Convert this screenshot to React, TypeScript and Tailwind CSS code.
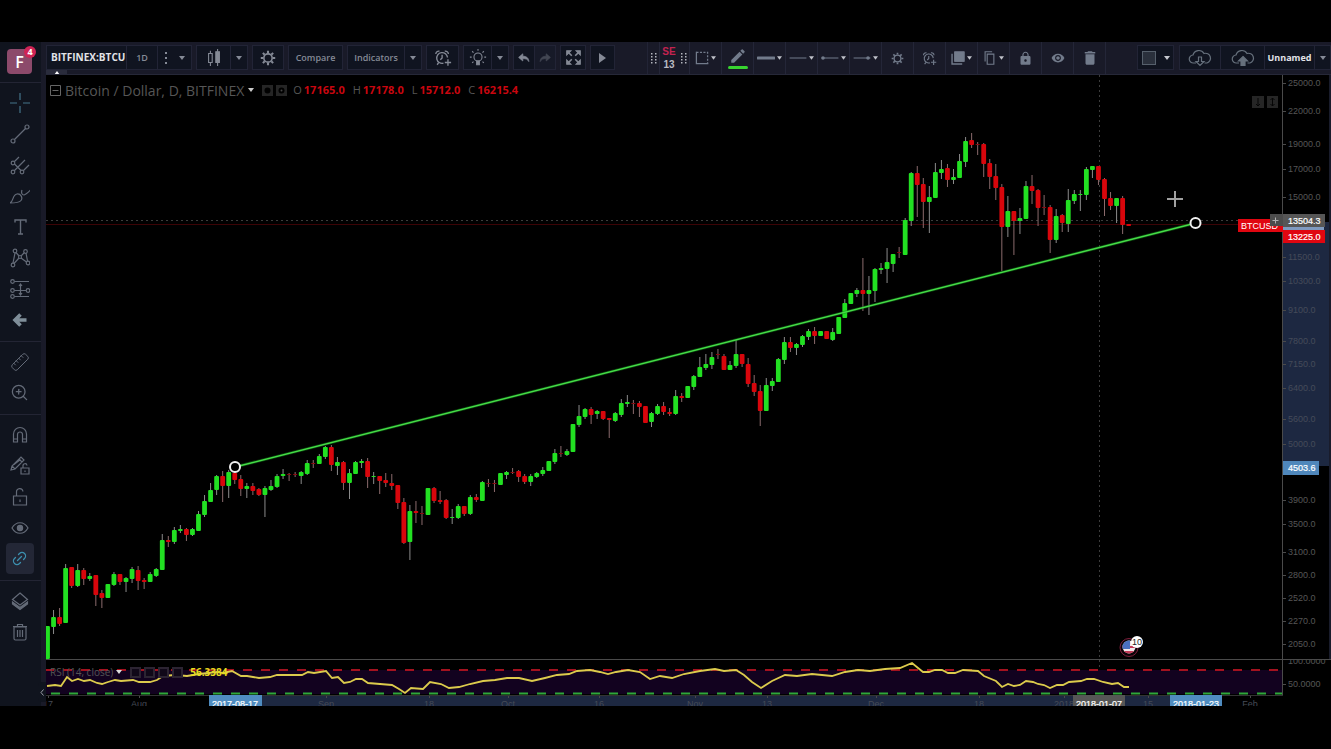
import type { ReactNode } from 'react';
import { useState } from 'react';
import { Link2, Ruler, ZoomIn } from 'lucide-react';
import { MdCreate, MdLock, MdDelete, MdRemoveRedEye } from 'react-icons/md';

// [up, body top, body bottom, wick top, wick bottom], one entry per day
type Candle = [number, number, number, number, number];

const candles: Candle[] = [
    [1, 626, 659, 626, 659], [1, 617, 627, 610, 634], [0, 617, 624, 608, 626], [1, 568, 623, 564, 623],
    [0, 567, 586, 567, 588], [1, 570, 586, 564, 587], [0, 570, 579, 568, 585], [1, 576, 579, 573, 581],
    [0, 575, 595, 575, 606], [0, 593, 598, 590, 608], [1, 584, 598, 584, 598], [1, 574, 585, 572, 586],
    [0, 574, 582, 574, 585], [1, 578, 582, 577, 592], [1, 569, 579, 567, 583], [0, 570, 581, 566, 590],
    [0, 580, 582, 578, 589], [1, 574, 582, 572, 582], [1, 569, 576, 568, 577], [1, 540, 570, 534, 570],
    [0, 540, 542, 536, 547], [1, 530, 542, 527, 544], [1, 529, 531, 525, 533], [0, 529, 535, 528, 541],
    [1, 529, 535, 528, 536], [1, 514, 531, 511, 531], [1, 501, 515, 495, 517], [1, 490, 502, 483, 502],
    [1, 476, 490, 475, 495], [0, 476, 486, 471, 502], [1, 472, 486, 470, 498], [0, 473, 480, 470, 484],
    [0, 479, 489, 475, 496], [1, 486, 489, 483, 498], [0, 486, 491, 483, 495], [0, 489, 495, 488, 496],
    [1, 488, 495, 486, 517], [1, 486, 490, 480, 491], [1, 476, 487, 474, 488], [1, 474, 476, 469, 479],
    [0, 474, 475, 473, 481], [0, 474, 475, 472, 477], [1, 472, 476, 471, 484], [1, 463, 474, 460, 475],
    [0, 463, 464, 460, 468], [1, 456, 464, 454, 464], [1, 447, 457, 446, 459], [0, 447, 465, 445, 471],
    [1, 462, 466, 457, 475], [0, 462, 483, 461, 490], [1, 473, 483, 469, 499], [1, 462, 474, 461, 474],
    [1, 461, 463, 459, 468], [0, 461, 477, 458, 488], [1, 476, 477, 472, 484], [0, 476, 481, 476, 494],
    [0, 480, 483, 473, 487], [0, 483, 486, 474, 490], [0, 485, 503, 485, 509], [0, 502, 543, 498, 544],
    [1, 511, 542, 505, 560], [0, 511, 513, 501, 523], [0, 513, 514, 506, 525], [1, 488, 515, 488, 515],
    [0, 488, 501, 487, 503], [0, 500, 502, 491, 504], [0, 500, 518, 499, 519], [1, 517, 518, 509, 524],
    [1, 506, 518, 504, 519], [0, 506, 514, 506, 516], [1, 497, 514, 495, 515], [0, 497, 500, 494, 502],
    [1, 482, 501, 481, 501], [0, 483, 484, 479, 487], [0, 483, 484, 480, 492], [1, 473, 485, 473, 485],
    [1, 472, 475, 471, 479], [0, 472, 473, 468, 474], [0, 471, 477, 470, 482], [0, 476, 482, 474, 484],
    [1, 476, 482, 474, 486], [1, 473, 477, 472, 478], [1, 470, 474, 467, 476], [1, 461, 471, 461, 471],
    [1, 453, 462, 449, 464], [0, 453, 454, 446, 457], [1, 451, 455, 449, 456], [1, 424, 452, 424, 452],
    [1, 416, 425, 405, 427], [1, 409, 417, 408, 419], [0, 409, 415, 407, 424], [1, 411, 414, 410, 419],
    [0, 411, 419, 411, 420], [0, 418, 420, 418, 438], [1, 413, 421, 412, 422], [1, 403, 415, 399, 417],
    [1, 402, 404, 395, 407], [0, 403, 404, 400, 414], [0, 403, 407, 401, 417], [0, 406, 423, 406, 423],
    [1, 413, 422, 412, 427], [1, 406, 414, 404, 415], [0, 406, 412, 402, 415], [0, 412, 414, 408, 416],
    [1, 396, 414, 390, 415], [0, 396, 398, 393, 402], [1, 386, 398, 386, 398], [1, 376, 387, 375, 390],
    [1, 367, 377, 357, 377], [1, 364, 368, 354, 370], [1, 357, 365, 352, 369], [0, 354, 355, 349, 359],
    [0, 356, 370, 354, 370], [1, 365, 370, 361, 370], [1, 354, 366, 340, 368], [0, 354, 364, 354, 367],
    [0, 364, 384, 358, 387], [0, 383, 392, 375, 396], [0, 391, 411, 385, 426], [1, 385, 411, 378, 411],
    [1, 381, 386, 378, 391], [1, 359, 382, 358, 382], [1, 342, 360, 337, 364], [0, 342, 348, 337, 352],
    [1, 344, 348, 343, 355], [1, 336, 345, 335, 347], [1, 331, 337, 329, 340], [0, 331, 336, 327, 344],
    [1, 331, 336, 331, 336], [0, 331, 339, 331, 339], [1, 332, 340, 328, 341], [1, 317, 334, 317, 334],
    [1, 303, 318, 299, 318], [1, 293, 304, 293, 304], [1, 290, 294, 288, 297], [0, 290, 294, 258, 311],
    [1, 290, 294, 276, 315], [1, 269, 291, 268, 302], [1, 268, 270, 263, 274], [1, 262, 269, 248, 283],
    [1, 254, 264, 254, 272], [0, 252, 253, 247, 258], [1, 220, 255, 218, 255], [1, 173, 221, 172, 226],
    [0, 173, 185, 166, 217], [0, 184, 202, 178, 228], [1, 197, 202, 186, 233], [1, 172, 198, 163, 198],
    [1, 169, 173, 160, 179], [0, 168, 180, 164, 187], [1, 177, 180, 169, 184], [1, 161, 178, 154, 178],
    [1, 141, 162, 137, 167], [0, 140, 145, 133, 148], [0, 144, 145, 142, 155], [0, 144, 164, 143, 177],
    [0, 163, 177, 159, 189], [0, 176, 188, 164, 200], [0, 187, 227, 184, 271], [1, 211, 227, 196, 237],
    [0, 211, 221, 211, 255], [1, 218, 221, 208, 234], [1, 186, 219, 181, 219], [0, 186, 191, 175, 204],
    [0, 190, 208, 189, 226], [0, 207, 208, 195, 215], [0, 207, 240, 205, 253], [1, 216, 240, 209, 243],
    [0, 215, 223, 214, 232], [1, 200, 224, 189, 232], [1, 194, 201, 190, 204], [1, 194, 195, 190, 211],
    [1, 169, 195, 167, 200], [1, 166, 170, 166, 178], [0, 166, 180, 166, 185], [0, 179, 199, 178, 216],
    [0, 198, 206, 192, 210], [1, 198, 206, 198, 223], [0, 198, 225, 196, 234], [0, 224, 226, 224, 226],
];

const rsi =
    '47,686 55,685 61,686 67,677 72,681 78,679 84,681 90,680 97,683 102,684 108,682 115,680 121,681 133,680 139,682 150,682 157,680 163,676 175,675 187,676 199,674 217,672 223,673 232,671 241,676 247,676 259,678 270,677 277,675 302,675 308,672 314,673 326,671 332,678 338,677 344,683 350,682 356,679 362,679 368,683 380,684 392,685 399,689 405,693 411,688 423,689 430,682 441,684 449,688 459,687 470,684 483,681 495,680 507,678 519,678 532,681 545,678 557,675 569,674 577,671 590,670 600,672 608,674 616,672 628,670 640,672 650,679 660,676 672,678 684,674 700,671 715,669 724,671 736,670 744,675 752,682 761,688 772,681 785,675 797,676 812,674 832,676 845,672 858,670 870,671 885,669 900,668 912,663 923,672 929,672 935,670 942,670 948,673 955,673 963,670 978,671 984,676 996,681 1002,687 1008,684 1014,686 1020,685 1026,681 1033,682 1038,684 1044,685 1050,688 1057,685 1063,685 1069,682 1081,681 1087,679 1094,679 1103,682 1112,684 1118,683 1124,687 1129,687';

const prices: [string, number][] = [
    ['25000.0', 83], ['22000.0', 111], ['19000.0', 144], ['17000.0', 169], ['15000.0', 197],
    ['11500.0', 257], ['10300.0', 281], ['9100.0', 310], ['7800.0', 341], ['7150.0', 364],
    ['6400.0', 388], ['5600.0', 419], ['5000.0', 444], ['3900.0', 500], ['3500.0', 524],
    ['3100.0', 552], ['2800.0', 575], ['2520.0', 598], ['2270.0', 621], ['2050.0', 644],
    ['50.0000', 684],
];

const dates: [string, number][] = [
    ['17', 48], ['Aug', 139], ['Sep', 326], ['18', 429], ['Oct', 508], ['16', 599], ['Nov', 695],
    ['13', 767], ['Dec', 876], ['18', 979], ['2018', 1064], ['15', 1148], ['Feb', 1250],
];

function Svg({ size = 20, children }: { size?: number; children: ReactNode }) {
    return (
        <svg width={size} height={size} viewBox="0 0 20 20" fill="none" stroke="currentColor" strokeWidth="1.2">
            {children}
        </svg>
    );
}

function Caret({ className = '' }: { className?: string }) {
    return (
        <svg width="6" height="4" viewBox="0 0 6 4" className={className}>
            <path d="M0 0h6L3 4z" fill="currentColor" />
        </svg>
    );
}

function AlarmIcon({ size = 18 }: { size?: number }) {
    return (
        <Svg size={size}>
            <path
                d="M15 9.500a6 6 0 1 0-4.500 6.300M9 6.500V10l-2 2M2 5.500c0-2 2-3.500 4-3M12 2.500c2-.5 4 1 4 3M3.500 17.500l1.500-2M15.500 11.500v7M12 15h7"
                strokeWidth="1.500"
            />
        </Svg>
    );
}

function GearIcon({ size = 18 }: { size?: number }) {
    return (
        <Svg size={size}>
            <circle cx="10" cy="10" r="5.200" strokeWidth="2" />
            <path
                d="M10 1v3M10 16v3M1 10h3M16 10h3M3.600 3.600l2.200 2.200M14.200 14.200l2.200 2.200M3.600 16.400l2.200-2.200M14.200 5.800l2.200-2.200"
                strokeWidth="2.600"
            />
        </Svg>
    );
}

function CloudIcon({ up = false }: { up?: boolean }) {
    return (
        <svg width="24" height="18" viewBox="0 0 24 18" fill="none" stroke="currentColor" strokeWidth="1.200">
            <path d="M8 14H5.500a4 4 0 0 1-.5-8A6 6 0 0 1 16 4.500a4.800 4.800 0 0 1 3 9.500h-2.500" />
            {up ? (
                <path d="M12 7.500l4.500 4.500H14v4.500h-4V12H7.500z" fill="currentColor" />
            ) : (
                <path d="M10.500 8h3v4.500H16l-4 4-4-4h2.500z" />
            )}
        </svg>
    );
}

function LineIcon({ kind }: { kind: 'thick' | 'thin' | 'start' | 'end' }) {
    return (
        <svg width="18" height="6" viewBox="0 0 18 6" stroke="currentColor" fill="currentColor">
            <path d="M1 3h16" strokeWidth={kind === 'thick' ? 3 : 1} strokeLinecap="round" />
            {kind === 'start' && <circle cx="2" cy="3" r="1.800" stroke="none" />}
            {kind === 'end' && <circle cx="15" cy="3" r="1.800" stroke="none" />}
        </svg>
    );
}

function Grip() {
    return (
        <svg width="6" height="11" viewBox="0 0 6 11" fill="#b4b6be">
            {[0, 3, 6, 9].map((y) => (
                <g key={y}>
                    <rect x="0" y={y} width="1.500" height="1.500" />
                    <rect x="4" y={y} width="1.500" height="1.500" />
                </g>
            ))}
        </svg>
    );
}

const toolGroups: { label: string; icon: ReactNode }[][] = [
    [
        {
            label: 'Cross',
            icon: <Svg><path d="M10 0v7M10 13v7M0 10h7M13 10h7" stroke="#44748a" /></Svg>,
        },
        {
            label: 'Trend line',
            icon: <Svg><circle cx="3" cy="17" r="2" /><circle cx="17" cy="3" r="2" /><path d="M4.500 15.500l11-11" /></Svg>,
        },
        {
            label: 'Pitchfork',
            icon: (
                <Svg>
                    <circle cx="3" cy="8" r="1.800" /><circle cx="3" cy="17" r="1.800" /><circle cx="12" cy="17" r="1.800" />
                    <path d="M4.500 6.500L9 2M4.500 15.500L15 5M13.500 15.500L19 10M4.500 9l6.500 6.500" />
                </Svg>
            ),
        },
        {
            label: 'Brush',
            icon: <Svg><path d="M0 17c4-2 2-8 7-9 4-.5 6 4 4 6.500-2 2.500-6 2.500-11 2.500zM12 4c-1 3 0 5 2 5 2-.5 4-2.500 6.500-5" /></Svg>,
        },
        { label: 'Text', icon: <Svg><path d="M5 5.500V3h11v2.500M10.500 3v14M8 17h5" strokeWidth="1.400" /></Svg> },
        {
            label: 'Pattern',
            icon: (
                <Svg>
                    <circle cx="3" cy="17" r="1.800" /><circle cx="5" cy="3" r="1.800" /><circle cx="15.500" cy="3.500" r="1.800" />
                    <circle cx="18" cy="15" r="1.800" /><circle cx="10" cy="9" r="1.500" />
                    <path d="M3 15L5 5M6 4.500l3 3.500M11 8l3.500-3.500M16 5l1.500 8M4 15.500l5-5.500M11 10l5.500 4" />
                </Svg>
            ),
        },
        {
            label: 'Projection',
            icon: (
                <Svg>
                    <circle cx="2.500" cy="2.500" r="1.800" /><circle cx="2.500" cy="11.500" r="1.800" />
                    <circle cx="18" cy="11.500" r="1.800" /><circle cx="2.500" cy="17.500" r="1.800" />
                    <path d="M4.500 2.500H19M4.500 11.500H16M4.500 17.500H19M10.500 5v11M9 7l1.500-2L12 7M9 14l1.500 2 1.500-2" />
                </Svg>
            ),
        },
        {
            label: 'Arrow',
            icon: (
                <Svg>
                    <path d="M10.500 4.500L5 10l5.500 5.500M6 10h10.500" stroke="#7f8e99" strokeWidth="3.600" />
                </Svg>
            ),
        },
    ],
    [
        { label: 'Measure', icon: <Ruler size={20} strokeWidth={1.200} className="-scale-x-100" /> },
        { label: 'Zoom in', icon: <ZoomIn size={19} strokeWidth={1.600} /> },
    ],
    [
        { label: 'Magnet', icon: <Svg><path d="M3.500 17V9a6.500 6.500 0 0 1 13 0v8h-4V9.500a2.500 2.500 0 0 0-5 0V17zM3.500 14h4M12.500 14h4" /></Svg> },
        {
            label: 'Stay in drawing mode',
            icon: (
                <Svg>
                    <path d="M1 14l1-4 9-9 3 3-9 9zM9 3l3 3M2 10l3 3M4 8.500l6.500-5" />
                    <path d="M11 12h8v6h-8zM13 12v-2a2 2 0 0 1 4-.5M15 14.500v1.500" />
                </Svg>
            ),
        },
        { label: 'Lock drawings', icon: <Svg><path d="M3.500 9h13v9h-13zM6.500 9V5a3.200 3.200 0 0 1 6.400-.5M10 12.500v2.500" /></Svg> },
        {
            label: 'Hide drawings',
            icon: (
                <Svg>
                    <path d="M2 10c4-7 12-7 16 0-4 7-12 7-16 0z" />
                    <circle cx="10" cy="10" r="2.600" fill="currentColor" />
                </Svg>
            ),
        },
        { label: 'Link drawings', icon: <Link2 size={17} strokeWidth={1.800} className="-rotate-45 text-[#3c8fae]" /> },
    ],
    [
        {
            label: 'Object tree',
            icon: (
                <Svg>
                    <path d="M10 2l7.500 6.500L10 14 2.500 8.500z" />
                    <path d="M2.500 11L10 16.500 17.500 11v2L10 18.500 2.500 13z" fill="currentColor" />
                </Svg>
            ),
        },
        { label: 'Remove', icon: <Svg><path d="M4 5h12v11.500a1.500 1.500 0 0 1-1.500 1.500h-9A1.500 1.500 0 0 1 4 16.500zM3 4.500h14M7.500 4V2.500h5V4M7.500 8v7M10 8v7M12.500 8v7" /></Svg> },
    ],
];

function Sidebar() {
    const [active, setActive] = useState('Link drawings');

    return (
        <aside className="relative w-[46px] shrink-0 bg-[#10141e] border-r-[5px] border-[#191a28]">
            <div className="h-10 pl-[7px] pt-[7px]">
                <button className="relative flex h-[25px] w-[25px] items-center justify-center rounded-sm bg-[#8c4a6b] text-base font-semibold text-white">
                    F
                    <span className="absolute -right-1 -top-[3px] flex h-3 w-3 items-center justify-center rounded-full bg-[#cf2455] text-[9px] font-bold">
                        4
                    </span>
                </button>
            </div>
            {toolGroups.map((group, index) => (
                <div key={index} className="flex flex-col items-center border-t border-[#232534] pb-[6px] pr-[2px] pt-1">
                    {group.map((tool) => (
                        <button
                            key={tool.label}
                            aria-label={tool.label}
                            onClick={() => setActive(tool.label)}
                            className={`flex h-[31px] w-7 items-center justify-center rounded-sm text-[#646b78] ${
                                active === tool.label ? 'bg-[#232736]' : ''
                            }`}
                        >
                            {tool.icon}
                        </button>
                    ))}
                </div>
            ))}
            <button
                aria-label="Collapse"
                className="absolute -right-[5px] bottom-1 flex h-5 w-2 items-center justify-center rounded-l-sm bg-[#10141e] text-[#9a9ca6]"
            >
                <svg width="4" height="7" viewBox="0 0 4 7" fill="none" stroke="currentColor">
                    <path d="M3.500 0.500L1 3.500l2.500 3" />
                </svg>
            </button>
        </aside>
    );
}

const box = 'flex h-[25px] shrink-0 border border-[#222436] bg-[#101420] text-[#858a96]';
const cell = 'flex items-center justify-center';
const split = 'flex items-center justify-center border-l border-[#222436]';

function DrawTool({ label, caret = false, children }: { label: string; caret?: boolean; children: ReactNode }) {
    return (
        <button
            aria-label={label}
            className="flex w-8 items-center justify-center gap-[2px] border-l border-[#242638] text-[#727b8b]"
        >
            {children}
            {caret && <Caret className="w-[5px] shrink-0 text-[#c0c2ca]" />}
        </button>
    );
}

function Header() {
    return (
        <header className="flex h-[33px] items-start border-b border-[#262838] bg-[#191a28] pt-[3px] text-[9px] font-semibold">
            <div className="flex gap-1">
                <div className={`${box} relative w-[146px]`}>
                    <input
                        aria-label="Symbol"
                        defaultValue="BITFINEX:BTCU"
                        className="w-[79px] bg-transparent pl-1 text-[10px] font-bold text-[#e2e3e8] outline-none"
                    />
                    <button className={`${split} w-[31px]`}>1D</button>
                    <button aria-label="Intervals" className={`${split} flex-1 gap-3`}>
                        <svg width="2" height="12" viewBox="0 0 2 12" fill="currentColor">
                            <path d="M0 0h2v2H0zM0 5h2v2H0zM0 10h2v2H0z" />
                        </svg>
                        <Caret />
                    </button>
                    <span className="absolute -left-px top-6 flex h-1 w-[21px] items-center justify-center bg-[#2a2c3c]">
                        <Caret className="h-[3px] rotate-180 text-white" />
                    </span>
                </div>
                <div className={`${box} w-[52px]`}>
                    <button aria-label="Candles" className={`${cell} flex-1`}>
                        <Svg size={18}>
                            <path d="M6 2v3M6 15v4M4 5h4v10H4zM14 0v3M14 15v4" />
                            <path d="M12 3h4v12h-4z" fill="currentColor" />
                        </Svg>
                    </button>
                    <button aria-label="Chart style" className={`${split} w-[17px]`}><Caret /></button>
                </div>
                <button aria-label="Settings" className={`${box} w-8 items-center justify-center`}><GearIcon size={16} /></button>
                <button className={`${box} w-[55px] items-center justify-center`}>Compare</button>
                <div className={`${box} w-[75px]`}>
                    <button className={`${cell} flex-1`}>Indicators</button>
                    <button aria-label="Indicator templates" className={`${split} w-[17px]`}><Caret /></button>
                </div>
                <button aria-label="Alert" className={`${box} w-[33px] items-center justify-center`}><AlarmIcon /></button>
                <div className={`${box} w-[46px]`}>
                    <button aria-label="Ideas" className={`${cell} flex-1`}>
                        <Svg size={18}>
                            <circle cx="10" cy="9" r="4.500" />
                            <path d="M8.500 13.500h3v4h-3z" fill="currentColor" />
                            <path d="M10 0v2M1 9h2M17 9h2M3.500 2.500L5 4M16.500 2.500L15 4M3.500 15.500L5 14M16.500 15.500L15 14" />
                        </Svg>
                    </button>
                    <button aria-label="More ideas" className={`${split} w-[17px]`}><Caret /></button>
                </div>
                <div className={`${box} w-[43px]`}>
                    <button aria-label="Undo" className={`${cell} flex-1`}>
                        <Svg size={12}><path d="M1 9l7-6v4c6 0 10 3 10 9-2-4-5-5-10-5v4z" fill="currentColor" /></Svg>
                    </button>
                    <button aria-label="Redo" className={`${split} flex-1 bg-[#171a28] text-[#434753]`}>
                        <Svg size={12}><path d="M19 9l-7-6v4C6 7 2 10 2 16c2-4 5-5 10-5v4z" fill="currentColor" /></Svg>
                    </button>
                </div>
                <button aria-label="Fullscreen" className={`${box} w-[26px] items-center justify-center`}>
                    <Svg size={17}>
                        <path d="M2 7V2h5zM13 2h5v5zM2 13v5h5zM18 13v5h-5z" fill="currentColor" />
                        <path d="M4 4l4 4M16 4l-4 4M4 16l4-4M16 16l-4-4" strokeWidth="1.800" />
                    </Svg>
                </button>
                <button aria-label="Replay" className={`${box} w-[25px] items-center justify-center`}>
                    <svg width="7" height="10" viewBox="0 0 7 10"><path d="M0 0l7 5-7 5z" fill="currentColor" /></svg>
                </button>
            </div>

            {/* Drawing toolbar */}
            <div className="-mt-[3px] ml-8 flex h-8 shrink-0 border-r border-[#242638]">
                <span className={`${split} w-3`}><Grip /></span>
                <span className="flex w-[19px] flex-col items-center justify-center gap-px border-l border-[#242638] font-['Liberation_Sans',sans-serif] text-[10px] leading-3 text-[#b9bbc3]">
                    <span className="text-[#c42350]">SE</span>
                    <span>13</span>
                </span>
                <span className={`${cell} w-[11px]`}><Grip /></span>
                <DrawTool label="Select area" caret>
                    <Svg size={14}>
                        <path d="M2 1v17h17" strokeWidth="1.800" />
                        <path d="M2 2h16v16" strokeDasharray="3 2" strokeWidth="1.800" />
                    </Svg>
                </DrawTool>
                <button
                    aria-label="Line color"
                    className="flex w-8 flex-col items-center justify-end border-l border-[#242638] pb-[5px] text-[#727b8b]"
                >
                    <MdCreate size={18} />
                    <span className="mt-px h-[3px] w-5 rounded-sm bg-[#38d430]" />
                </button>
                <DrawTool label="Line width" caret><LineIcon kind="thick" /></DrawTool>
                <DrawTool label="Line style" caret><LineIcon kind="thin" /></DrawTool>
                <DrawTool label="Line start" caret><LineIcon kind="start" /></DrawTool>
                <DrawTool label="Line end" caret><LineIcon kind="end" /></DrawTool>
                <DrawTool label="Line settings"><GearIcon size={13} /></DrawTool>
                <DrawTool label="Line alert"><AlarmIcon size={15} /></DrawTool>
                <DrawTool label="Visual order" caret>
                    <Svg size={14}><path d="M5 1h14v14H5z" fill="currentColor" /><path d="M1.500 4v14.500H16" strokeWidth="2" /></Svg>
                </DrawTool>
                <DrawTool label="Clone" caret>
                    <Svg size={14}><path d="M6 4.500h9.500V19H6zM3 15V1h10" strokeWidth="1.600" /></Svg>
                </DrawTool>
                <DrawTool label="Lock"><MdLock size={15} /></DrawTool>
                <DrawTool label="Hide"><MdRemoveRedEye size={14} /></DrawTool>
                <DrawTool label="Delete"><MdDelete size={18} /></DrawTool>
            </div>

            <div className="ml-auto flex gap-[5px]">
                <button aria-label="Layout" className={`${box} w-[37px] items-center justify-center gap-2`}>
                    <span className="h-[14px] w-[14px] border border-[#56606c] bg-[#2a303c]" />
                    <Caret className="text-[#c6c8cf]" />
                </button>
                <div className={`${box} w-[152px]`}>
                    <button aria-label="Load" className={`${cell} w-10 text-[#66707c]`}><CloudIcon /></button>
                    <button aria-label="Save" className={`${split} w-11 text-[#66707c]`}><CloudIcon up /></button>
                    <button className={`${split} w-[50px] font-bold text-[#e2e3e8]`}>Unnamed</button>
                    <button aria-label="Layouts" className={`${split} flex-1`}><Caret /></button>
                </div>
            </div>
        </header>
    );
}

function Legend() {
    const values = [['O', '17165.0'], ['H', '17178.0'], ['L', '15712.0'], ['C', '16215.4']];

    return (
        <div className="absolute left-1 top-[5px] flex h-5 items-center text-[#565656]">
            <svg width="11" height="11" viewBox="0 0 11 11" fill="none" stroke="#666">
                <path d="M.5.5h10v10H.5zM2.500 5.500h6" />
            </svg>
            <button className="ml-1 flex items-center gap-1 text-[14px]">
                Bitcoin / Dollar, D, BITFINEX
                <Caret className="text-[#ccc]" />
            </button>
            <span className="ml-2 flex gap-[3px] text-[#4a4a4a]">
                <svg width="11" height="11" viewBox="0 0 11 11"><path d="M0 0h11v11H0z" fill="#252525" /><circle cx="5.500" cy="5.500" r="3" /></svg>
                <svg width="11" height="11" viewBox="0 0 11 11"><path d="M0 0h11v11H0z" fill="#252525" /><circle cx="5.500" cy="5.500" r="3" /><circle cx="5.500" cy="5.500" r="1" fill="#444" /></svg>
            </span>
            <span className="ml-[6px] flex gap-2 text-[11px]">
                {values.map(([name, value]) => (
                    <span key={name} className="flex gap-[2px]">
                        {name}
                        <span className="font-bold text-[#c9060f]">{value}</span>
                    </span>
                ))}
            </span>
        </div>
    );
}

function Chart() {
    return (
        <svg
            viewBox="46 75 1285 631"
            className="block h-auto w-full bg-black font-['Liberation_Sans',sans-serif] text-[9px]"
        >
            {/* Crosshair and last price */}
            <path d="M46 220.500h1236M1099.500 75v620" stroke="#3c3c3c" strokeDasharray="2 3" />
            <path d="M46 224.500h1236" stroke="#3c0406" />

            {candles.map(([up, top, bottom, high, low], i) => {
                const x = 47.5 + i * 6.04;
                const thin = bottom - top < 2;
                const width = thin ? 4 : 4.8;
                return (
                    <g key={i} fill={up ? '#22e022' : thin ? '#8a0a10' : '#d8060c'}>
                        <rect x={x - 0.5} y={high} width="1" height={low - high} fill={up ? '#8a8a8a' : '#8a6a6c'} />
                        <rect x={x - width / 2} y={top} width={width} height={bottom - top} rx={thin ? 0 : 1} />
                    </g>
                );
            })}

            {/* Trend line */}
            <path d="M235 467L1196 223" stroke="#0f7d16" strokeWidth="3" opacity=".5" />
            <path d="M235 467L1196 223" stroke="#46dc48" strokeWidth="1.500" />
            <g fill="#000" stroke="#f0f0f0" strokeWidth="2">
                <circle cx="235" cy="467" r="5" />
                <circle cx="1195.500" cy="223" r="5" />
            </g>
            <path d="M1175 191v16M1167 199h16" stroke="#a0a0a0" strokeWidth="2" />

            {/* Pane icons */}
            <path d="M1252 96h12v12h-12zM1267 96h11v12h-11z" fill="#262626" />
            <path d="M1258 98v8M1256 104l2 2 2-2M1272.500 98v8M1270.500 100l2-2 2 2M1270.500 104l2 2 2-2" stroke="#050505" fill="none" />

            {/* Economic event */}
            <circle cx="1129" cy="647.500" r="9" fill="#0a0408" stroke="#7e1f3c" />
            <clipPath id="flag"><circle cx="1129" cy="647" r="6.500" /></clipPath>
            <g clipPath="url(#flag)">
                <path d="M1122 640h14v14h-14z" fill="#f1e6ea" />
                <path d="M1122 646h14v2h-14zM1122 651h14v4h-14z" fill="#c43a57" />
                <path d="M1122 640h8v9h-8z" fill="#4a6fc0" />
            </g>
            <circle cx="1137" cy="642" r="6" fill="#fff" />
            <text x="1137" y="645" textAnchor="middle" fill="#222">10</text>

            {/* RSI */}
            <path d="M46 670h1236v24H46z" fill="#12021f" />
            <path d="M46 670h1236" stroke="#a3121f" strokeWidth="2" strokeDasharray="9 9" strokeDashoffset="-17" />
            <path d="M46 693.500h1236" stroke="#2fa83a" strokeWidth="2" strokeDasharray="9 9" strokeDashoffset="-5" />
            <polyline points={rsi} fill="none" stroke="#dccb4c" strokeWidth="1.800" />
            <path d="M46 659.500h1285" stroke="#4a4a4a" />
            <path d="M46 695.500h1237" stroke="#333" />

            {/* Price axis */}
            <path d="M1282.500 75v620" stroke="#4a4a4a" />
            <path d="M1283 222h46v244h-46z" fill="#1d2841" />
            <path d="M1329 75h2v584h-2z" fill="#191c2b" />
            {prices.map(([label, y]) => (
                <g key={label}>
                    <path d={`M1283 ${y}.5h3`} stroke="#4a4a4a" />
                    <text x="1288" y={y + 3} fill={y > 222 && y < 466 ? '#454b59' : '#565656'}>{label}</text>
                </g>
            ))}
            <clipPath id="rsi-axis"><path d="M1283 660h48v46h-48z" /></clipPath>
            <text x="1288" y="664" fill="#565656" clipPath="url(#rsi-axis)">100.0000</text>

            <path d="M1238 219h45v13h-45z" fill="#e00610" />
            <text x="1241" y="229" fill="#fff">BTCUSD</text>
            <path d="M1270 214h13v12h-13z" fill="#4c4c4c" />
            <path d="M1275.500 217.500v6M1272.500 220.500h6" stroke="#b0b0b0" />
            <path d="M1283 227h41v3h-41z" fill="#7f9ac0" />
            <path d="M1283 214h42v13h-42z" fill="#565656" />
            <path d="M1283 230h42v13h-42z" fill="#e00610" />
            <path d="M1283 461h36v14h-36z" fill="#4f87bb" />
            <g fill="#fff" stroke="#fff" strokeWidth=".2">
                <text x="1288" y="224">13504.3</text>
                <text x="1288" y="240">13225.0</text>
                <text x="1288" y="471">4503.6</text>
            </g>

            {/* Time axis */}
            <path d="M235 696h961v10H235z" fill="#1d2841" />
            {dates.map(([label, x]) => (
                <g key={x}>
                    <path d={`M${x}.5 696v2`} stroke="#4a4a4a" />
                    <text x={x} y="707" textAnchor="middle" fill="#454b57">{label}</text>
                </g>
            ))}
            <path d="M209 695h53v11h-53zM1170 695h52v11h-52z" fill="#4f8cc0" />
            <path d="M1073 695h52v11h-52z" fill="#565656" />
            <g fill="#fff" stroke="#fff" strokeWidth=".2" textAnchor="middle">
                <text x="235" y="707">2017-08-17</text>
                <text x="1099" y="707">2018-01-07</text>
                <text x="1196" y="707">2018-01-23</text>
            </g>
        </svg>
    );
}

export default function App() {
    return (
        <div className="flex min-h-screen flex-col bg-black pb-[43px] pt-[42px] font-['Open_Sans','Noto_Sans',sans-serif]">
            <div className="flex flex-1">
                <Sidebar />
                <main className="flex min-w-0 flex-1 flex-col">
                    <Header />
                    <div className="relative">
                        <Chart />
                        <Legend />
                        {/* RSI legend */}
                        <div className="absolute bottom-[26px] left-1 flex h-4 items-center text-[10px] text-[#555]">
                            <button className="flex items-center gap-[3px]">
                                RSI (14, close)
                                <Caret className="text-[#ddd]" />
                            </button>
                            <span className="ml-2 flex gap-[3px]">
                                {[0, 1, 2, 3].map((n) => (
                                    <span key={n} className="h-[11px] w-[11px] border-2 border-[#2c2432] bg-[#100818]" />
                                ))}
                            </span>
                            <span className="ml-[7px] font-bold text-[#e6dc1e]">56.3384</span>
                        </div>
                    </div>
                </main>
            </div>
        </div>
    );
}
